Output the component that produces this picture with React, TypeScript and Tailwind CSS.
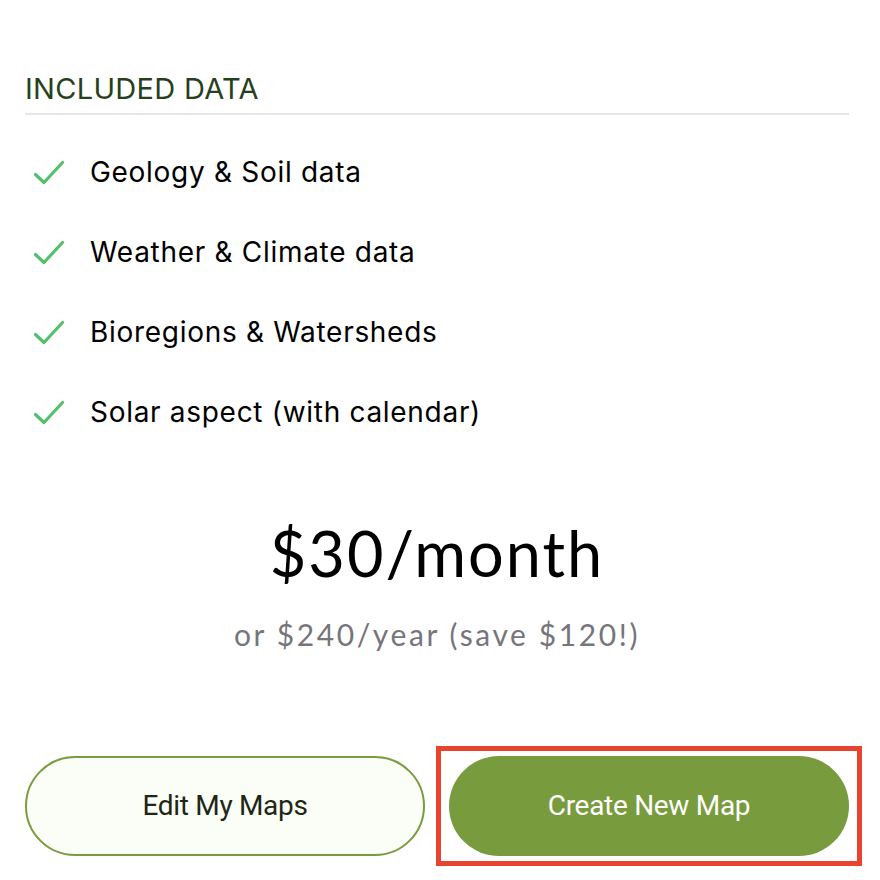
import React from 'react';

const items = [
  'Geology & Soil data',
  'Weather & Climate data',
  'Bioregions & Watersheds',
  'Solar aspect (with calendar)',
];

function CheckMark() {
  return (
    <svg width="32" height="25" viewBox="0 0 32 25" fill="none" className="shrink-0">
      <path
        d="M2.5 14.5 L11 22.5 L29.5 2.5"
        stroke="#55c06b"
        strokeWidth="3.2"
        strokeLinecap="round"
        strokeLinejoin="round"
      />
    </svg>
  );
}

export default function App() {
  return (
    <div className="min-h-screen w-full bg-white">
      <div className="w-[824px] ml-[25px] pt-[71px] flex flex-col">
        <h2
          className="text-[29px] leading-[36px] text-[#263f1c] pb-[6px] border-b-2 border-[#e6e6ea] tracking-[0.3px]"
          style={{ fontFamily: 'Inter, "Liberation Sans", sans-serif' }}
        >
          INCLUDED DATA
        </h2>

        <ul className="pt-[17px] flex flex-col">
          {items.map((label) => (
            <li key={label} className="h-[80px] flex items-center gap-[25px] pl-[8px]">
              <CheckMark />
              <span
                className="text-[28px] text-black tracking-[0.7px]"
                style={{ fontFamily: 'Inter, "Liberation Sans", sans-serif' }}
              >
                {label}
              </span>
            </li>
          ))}
        </ul>

        <div
          className="mt-[70px] flex flex-col items-center"
          style={{ fontFamily: 'Lato, "Open Sans", sans-serif' }}
        >
          <div className="text-[63px] leading-[62px] text-black tracking-[2px]">$30/month</div>
          <div className="mt-[36px] text-[30px] leading-[29px] text-[#76757c] tracking-[2.6px]">
            or $240/year (save $120!)
          </div>
        </div>

        <div
          className="mt-[107px] flex gap-6"
          style={{ fontFamily: 'Roboto, "Liberation Sans", sans-serif' }}
        >
          <button className="w-[400px] h-[100px] rounded-full border-2 border-[#7a9c3e] bg-[#fbfdf7] text-[28px] tracking-[-0.3px] text-[#1e2616]">
            Edit My Maps
          </button>
          <div className="relative">
            <button className="w-[400px] h-[100px] rounded-full bg-[#789b3d] text-[28px] tracking-[-0.3px] text-white">
              Create New Map
            </button>
            <div className="absolute -left-[13px] -top-[10px] -right-[13px] -bottom-[10px] border-[5px] border-[#e8432e] pointer-events-none" />
          </div>
        </div>
      </div>
    </div>
  );
}
